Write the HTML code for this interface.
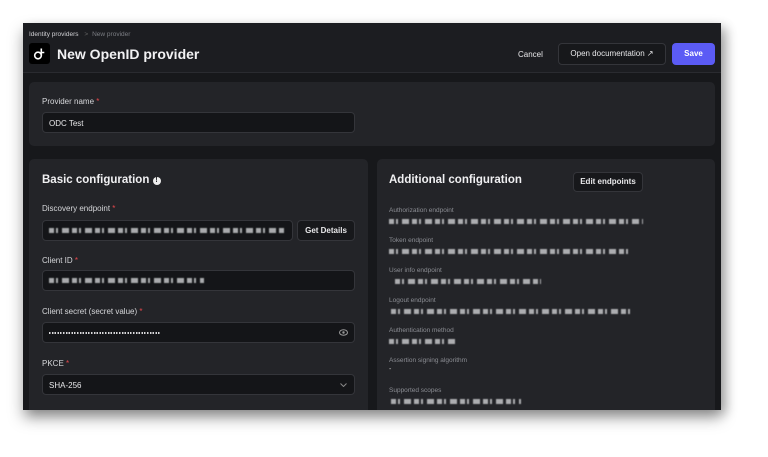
<!DOCTYPE html>
<html><head><style>
*{box-sizing:border-box;margin:0;padding:0}
body{width:768px;height:457px;background:#fff;position:relative;overflow:hidden;font-family:"Liberation Sans",sans-serif}
.scr{position:absolute;left:23px;top:23px;width:698px;height:387px;background:#17181b;overflow:hidden;box-shadow:0 8px 14px rgba(0,0,0,.35),6px 4px 10px rgba(0,0,0,.2)}
.a{position:absolute}
.hdr{left:0;top:0;width:698px;height:50px;background:#1c1d21;border-bottom:1px solid #2a2b30}
.panel{background:#232428;border-radius:5px}
.lbl{font-size:8px;color:#d6d7da}
.req{color:#e5484d}
.inp{background:#141518;border:1px solid #34353a;border-radius:4px;height:21px;font-size:8px;color:#e8e8ea;padding:6px 6px}
.btn{border:1px solid #34353a;background:#17181b;border-radius:4px;font-size:8px;color:#e8e8ea;text-align:center;font-weight:bold;line-height:19px}
.rl{font-size:6.5px;color:#8b8d93}
.blur{height:5px;background:repeating-linear-gradient(90deg,#cfd0d3 0 5px,transparent 5px 7px,#cfd0d3 7px 9px,transparent 9px 13px,#cfd0d3 13px 20px,transparent 20px 23px);filter:blur(.5px);opacity:.8}
h2{font-size:11.5px;color:#f0f0f2;font-weight:bold}
</style></head><body>
<div class="scr">
 <div class="a hdr"></div>
 <div class="a" style="left:6px;top:8px;font-size:6.5px;color:#d0d0d4">Identity providers <span style="color:#666;margin:0 4px">&gt;</span><span style="color:#7c7e84">New provider</span></div>
 <div class="a" style="left:6px;top:20px;width:21px;height:21px;background:#000;border-radius:3px">
  <svg width="21" height="21" viewBox="0 0 21 21"><circle cx="9" cy="12.5" r="3.3" fill="none" stroke="#fff" stroke-width="1.6"/><path d="M12.3 12.5V5.5M12.3 9.5h3" stroke="#fff" stroke-width="1.6" fill="none"/></svg>
 </div>
 <div class="a" style="left:34px;top:23px;font-size:14px;font-weight:bold;color:#f2f2f4">New OpenID provider</div>
 <div class="a" style="left:495px;top:27px;font-size:8px;color:#e8e8ea">Cancel</div>
 <div class="a btn" style="left:535px;top:20px;width:108px;height:22px;line-height:20px;font-weight:normal">Open documentation &#x2197;</div>
 <div class="a" style="left:649px;top:20px;width:43px;height:22px;background:#5b5bf5;border-radius:4px;color:#fff;font-size:8px;font-weight:bold;text-align:center;line-height:22px">Save</div>

 <div class="a panel" style="left:6px;top:59px;width:686px;height:64px"></div>
 <div class="a lbl" style="left:19px;top:74px">Provider name <span class="req">*</span></div>
 <div class="a inp" style="left:19px;top:89px;width:313px">ODC Test</div>

 <div class="a panel" style="left:6px;top:136px;width:339px;height:260px"></div>
 <h2 class="a" style="left:19px;top:151px">Basic configuration <span style="display:inline-block;width:8px;height:8px;border-radius:50%;background:#eee;color:#232428;font-size:7px;text-align:center;line-height:8px;vertical-align:1px">!</span></h2>
 <div class="a lbl" style="left:19px;top:181px">Discovery endpoint <span class="req">*</span></div>
 <div class="a inp" style="left:19px;top:197px;width:251px"><div class="blur" style="width:236px;margin-top:1px"></div></div>
 <div class="a btn" style="left:274px;top:197px;width:58px;height:21px">Get Details</div>
 <div class="a lbl" style="left:19px;top:233px">Client ID <span class="req">*</span></div>
 <div class="a inp" style="left:19px;top:247px;width:313px"><div class="blur" style="width:155px;margin-top:1px"></div></div>
 <div class="a lbl" style="left:19px;top:284px">Client secret (secret value) <span class="req">*</span></div>
 <div class="a inp" style="left:19px;top:299px;width:313px"><div style="margin-top:3px;width:112px;height:2px;background:repeating-linear-gradient(90deg,#d8d8da 0 1.5px,transparent 1.5px 2.8px)"></div><svg class="a" style="right:6px;top:6px" width="9" height="7" viewBox="0 0 9 7"><ellipse cx="4.5" cy="3.5" rx="4" ry="2.7" fill="none" stroke="#999" stroke-width="1"/><circle cx="4.5" cy="3.5" r="1.2" fill="#999"/></svg></div>
 <div class="a lbl" style="left:19px;top:336px">PKCE <span class="req">*</span></div>
 <div class="a inp" style="left:19px;top:351px;width:313px">SHA-256<svg class="a" style="right:7px;top:8px" width="7" height="4" viewBox="0 0 7 4"><path d="M.5.5l3 3 3-3" stroke="#888" fill="none"/></svg></div>

 <div class="a panel" style="left:354px;top:136px;width:338px;height:260px"></div>
 <h2 class="a" style="left:366px;top:151px">Additional configuration</h2>
 <div class="a btn" style="left:550px;top:149px;width:70px;height:20px;line-height:18px">Edit endpoints</div>
 <div class="a rl" style="left:366px;top:184px">Authorization endpoint</div><div class="a blur" style="left:366px;top:196px;width:254px"></div>
 <div class="a rl" style="left:366px;top:214px">Token endpoint</div><div class="a blur" style="left:366px;top:226px;width:240px"></div>
 <div class="a rl" style="left:366px;top:244px">User info endpoint</div><div class="a blur" style="left:372px;top:256px;width:146px"></div>
 <div class="a rl" style="left:366px;top:274px">Logout endpoint</div><div class="a blur" style="left:368px;top:286px;width:240px"></div>
 <div class="a rl" style="left:366px;top:304px">Authentication method</div><div class="a blur" style="left:366px;top:316px;width:68px"></div>
 <div class="a rl" style="left:366px;top:334px">Assertion signing algorithm</div><div class="a" style="left:366px;top:343px;color:#ccc;font-size:7px">-</div>
 <div class="a rl" style="left:366px;top:364px">Supported scopes</div><div class="a blur" style="left:368px;top:376px;width:130px"></div>
</div>
</body></html>
